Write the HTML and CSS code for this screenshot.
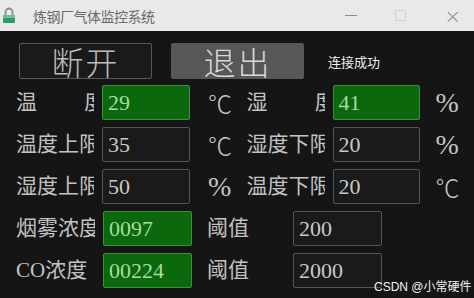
FILE: index.html
```html
<!DOCTYPE html>
<html lang="zh-CN">
<head>
    <meta charset="UTF-8">
    <title>炼钢厂气体监控系统</title>
    <link rel="stylesheet" href="styles.css">
</head>
<body>
    <div class="titlebar">
        <svg class="app-icon" width="14" height="17" viewBox="0 0 14 17">
            <path d="M3.5 8 V5 a3.5 3.5 0 0 1 7 0 V8" fill="none" stroke="#8a8a8a" stroke-width="1.8"/>
            <rect x="1" y="8" width="12" height="8" rx="1" fill="#2f9a6a"/>
            <rect x="1" y="8" width="12" height="3" fill="#6fbf96"/>
        </svg>
        <span class="title">炼钢厂气体监控系统</span>
        <div class="win-btns">
            <span class="win-min"></span>
            <span class="win-max"></span>
            <span class="win-close">×</span>
        </div>
    </div>

    <div class="main">
        <div class="toolbar">
            <button class="btn">断开</button>
            <button class="btn btn-exit">退出</button>
            <span class="state">连接成功</span>
        </div>

        <div class="row">
            <div class="lbl">温　　 度</div>
            <div class="box green">29</div>
            <div class="unit">℃</div>
            <div class="lbl">湿　　 度</div>
            <div class="box green">41</div>
            <div class="unit pct">%</div>
        </div>
        <div class="row">
            <div class="lbl">温度上限</div>
            <div class="box">35</div>
            <div class="unit">℃</div>
            <div class="lbl">湿度下限</div>
            <div class="box">20</div>
            <div class="unit pct">%</div>
        </div>
        <div class="row">
            <div class="lbl">湿度上限</div>
            <div class="box">50</div>
            <div class="unit pct">%</div>
            <div class="lbl">温度下限</div>
            <div class="box">20</div>
            <div class="unit">℃</div>
        </div>
        <div class="row">
            <div class="lbl">烟雾浓度</div>
            <div class="box green">0097</div>
            <div class="lbl lbl-th">阈值</div>
            <div class="box">200</div>
        </div>
        <div class="row">
            <div class="lbl">CO浓度</div>
            <div class="box green">00224</div>
            <div class="lbl lbl-th">阈值</div>
            <div class="box">2000</div>
        </div>
    </div>

    <div class="mark">CSDN @小常硬件</div>
</body>
</html>
```

FILE: styles.css
```css
body {
    margin: 0;
    padding: 0;
    width: 474px;
    height: 298px;
    overflow: hidden;
    background-color: #151515;
    font-family: "Liberation Serif", "Noto Sans CJK SC", serif;
    color: #c4c4c4;
    position: relative;
}
.titlebar {
    height: 31px;
    background-color: #e9e9e9;
    display: flex;
    align-items: center;
    padding-left: 2px;
}
.app-icon {
    margin-right: 17px;
}
.title {
    font-family: "Noto Sans CJK SC", sans-serif;
    font-size: 14px;
    color: #6a6a6a;
    letter-spacing: -0.5px;
}
.win-btns {
    margin-left: auto;
    display: flex;
    align-items: center;
}
.win-min {
    width: 12px;
    height: 1px;
    background-color: #8a8a8a;
    margin-right: 38px;
}
.win-max {
    width: 9px;
    height: 9px;
    border: 1px solid #d2d2d2;
    margin-right: 38px;
}
.win-close {
    font-family: "DejaVu Sans", sans-serif;
    font-size: 20px;
    font-weight: 300;
    color: #8c8c8c;
    margin-right: 13px;
}
.main {
    padding: 12px 0 0 16px;
}
.toolbar {
    display: flex;
    align-items: center;
    height: 36px;
    padding-left: 3px;
    margin-bottom: 6px;
}
.btn {
    width: 133px;
    height: 36px;
    border: 1px solid #585858;
    border-radius: 2px;
    background-color: #1a1a1a;
    color: #bcbcbc;
    font-family: "Noto Sans CJK SC", sans-serif;
    font-size: 32px;
    font-weight: 300;
    line-height: 32px;
    letter-spacing: 2px;
    padding: 0;
}
.btn-exit {
    margin-left: 19px;
    background-color: #575757;
    border-color: #575757;
    color: #d8d8d8;
}
.state {
    margin-left: 24px;
    font-family: "Noto Sans CJK SC", sans-serif;
    font-size: 13px;
    color: #f0f0f0;
}
.row {
    display: flex;
    align-items: center;
    height: 35px;
    margin-bottom: 7px;
}
.lbl {
    width: 79px;
    margin-right: 8px;
    overflow: hidden;
    white-space: pre;
    font-size: 21px;
    line-height: 35px;
    color: #c2c2c2;
}
.box {
    width: 89px;
    height: 35px;
    box-sizing: border-box;
    border: 1px solid #555555;
    border-radius: 2px;
    background-color: #1a1a1a;
    padding-left: 5px;
    font-size: 22px;
    line-height: 33px;
    color: #c8c8c8;
}
.box.green {
    background-color: #0c680c;
    border-color: #3f8f3f;
    color: #a6dca0;
}
.unit {
    width: 39px;
    margin-left: 18px;
    font-family: "Noto Sans CJK SC", sans-serif;
    font-size: 24px;
    font-weight: 300;
    color: #c4c4c4;
}
.unit.pct {
    font-family: "Liberation Serif", serif;
    font-size: 28px;
}
.row .unit:last-child {
    margin-left: 15px;
}
.lbl-th {
    width: 86px;
    margin-left: 15px;
    margin-right: 0;
}
.mark {
    position: absolute;
    left: 374px;
    top: 277px;
    white-space: nowrap;
    font-family: "Liberation Sans", "Noto Sans CJK SC", sans-serif;
    font-size: 12px;
    color: #f2f2f2;
}
```
